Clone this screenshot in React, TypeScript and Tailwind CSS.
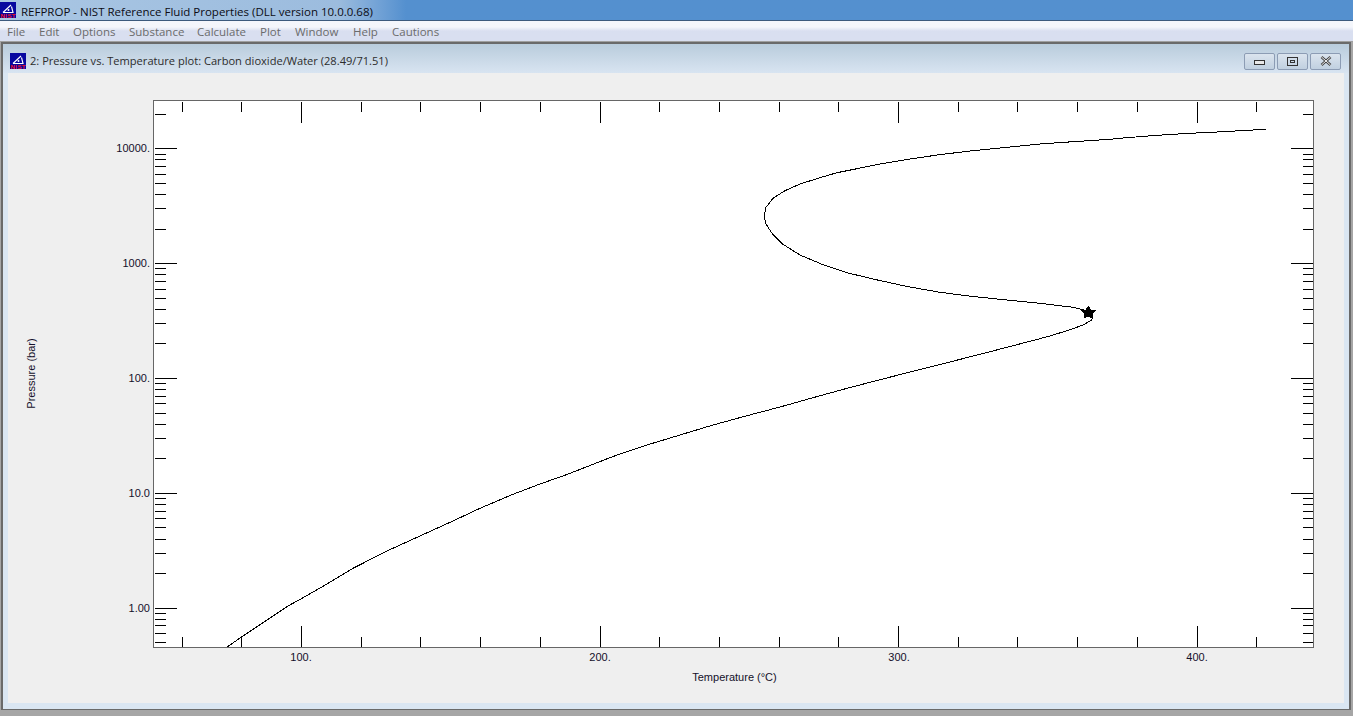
const MENU = [
  { label: 'File', w: 'w-[32px]' },
  { label: 'Edit', w: 'w-[34px]' },
  { label: 'Options', w: 'w-[56px]' },
  { label: 'Substance', w: 'w-[68px]' },
  { label: 'Calculate', w: 'w-[63px]' },
  { label: 'Plot', w: 'w-[35px]' },
  { label: 'Window', w: 'w-[58px]' },
  { label: 'Help', w: 'w-[39px]' },
  { label: 'Cautions', w: 'w-[60px]' },
]

const LEFT = 153.5
const RIGHT = 1313.5
const TOP = 100.5
const BOTTOM = 647.5
const DECADE = 114.85
const Y_ONE = 607.7

const yOf = (p: number) => Y_ONE - Math.log10(p) * DECADE
const xOf = (t: number) => 301 + (t - 100) * 2.985

const xTicks = [60, 80, 100, 120, 140, 160, 180, 200, 220, 240, 260, 280, 300, 320, 340, 360, 380, 400, 420]
const yMajor = [1, 10, 100, 1000, 10000]
const yMinor: number[] = [0.5, 0.6, 0.7, 0.8, 0.9, 20000]
for (const d of [1, 10, 100, 1000]) {
  for (let m = 2; m <= 9; m++) yMinor.push(d * m)
}

// traced off the plot, low temperature end first
const CURVE = [
  [227, 647], [242, 636.7], [263, 622.7], [288, 606], [302, 598.3], [327, 584], [353, 568.3], [387, 551],
  [420, 536], [453, 521], [480, 508.3], [513, 494.3], [540, 484], [567, 474.5], [590, 465.5], [613, 456.5],
  [647, 445], [680, 435], [713, 425], [747, 415.7], [780, 407], [813, 397.7], [847, 388.3], [880, 379.7],
  [913, 371.3], [947, 362.7], [980, 354.3], [1013, 345.7], [1047, 336.8], [1070, 329.8], [1083, 325], [1091, 320.5],
  [1093, 317], [1092, 314], [1088, 311], [1073, 307.3], [1040, 303.3], [1007, 300], [973, 296.5], [940, 292.3],
  [907, 286.5], [873, 279], [847, 272.7], [823, 264.7], [800, 255], [783, 244.3], [772, 233.3], [766, 224],
  [764, 216.7], [766, 207.3], [773, 198.3], [785, 190.7], [800, 184], [818, 178.3], [837, 172.7], [857, 168.7],
  [880, 164], [907, 159.5], [940, 154.6], [973, 150.7], [1007, 147.3], [1040, 144], [1073, 141.7], [1110, 139.3],
  [1123, 138], [1157, 135.3], [1190, 133.3], [1223, 131.7], [1266, 129.3],
]

function Logo({ className }: { className: string }) {
  return (
    <svg viewBox="0 0 16 16" className={className}>
      <rect width="16" height="16" fill="#0808a0" />
      <path d="M3 10.5 L11 3 M3 10.5 H13 L11.5 4.5" stroke="#fff" strokeWidth="1.1" fill="none" />
      <circle cx="8.5" cy="8" r="1" fill="#fff" />
      <text x="8" y="15.6" textAnchor="middle" fontSize="6" fontWeight="700" fill="#f01020" textLength="15" fontFamily="Liberation Sans, sans-serif">
        NIST
      </text>
    </svg>
  )
}

function WinButton({ children }: { children: React.ReactNode }) {
  return (
    <div className="flex h-[17px] w-[31px] items-center justify-center rounded-[2px] border border-[#8c9cb4] bg-gradient-to-b from-[#dbe4ee] to-[#c0d0e0]">
      {children}
    </div>
  )
}

function Plot() {
  const points = CURVE.map((p) => p.join(',')).join(' ')
  return (
    <svg
      viewBox="8 73 1335 630"
      width="1335"
      height="630"
      className="block"
      style={{ fontFamily: '"Liberation Sans", Arial, sans-serif' }}
    >
      <g shapeRendering="crispEdges">
        <rect x={LEFT} y={TOP} width={RIGHT - LEFT} height={BOTTOM - TOP} fill="#fff" stroke="#666" />
        {xTicks.map((t) => {
          const x = Math.round(xOf(t)) + 0.5
          const len = t % 100 === 0 ? 22 : 11
          return (
            <g key={t} stroke="#000">
              <line x1={x} x2={x} y1={TOP + 1} y2={TOP + len} />
              <line x1={x} x2={x} y1={BOTTOM - 1} y2={BOTTOM - len} />
            </g>
          )
        })}
        {yMajor.map((p) => {
          const y = Math.round(yOf(p)) + 0.5
          return (
            <g key={p} stroke="#000">
              <line x1={LEFT + 1} x2={LEFT + 23} y1={y} y2={y} />
              <line x1={RIGHT - 1} x2={RIGHT - 23} y1={y} y2={y} />
            </g>
          )
        })}
        {yMinor.map((p) => {
          const y = Math.round(yOf(p)) + 0.5
          return (
            <g key={p} stroke="#000">
              <line x1={LEFT + 1} x2={LEFT + 12} y1={y} y2={y} />
              <line x1={RIGHT - 1} x2={RIGHT - 11} y1={y} y2={y} />
            </g>
          )
        })}
        <polyline points={points} fill="none" stroke="#000" strokeWidth="1" />
        <path
          d="M1088.3 305.5 L1090.8 309.5 L1095.5 310.5 L1092.3 314 L1093 318.5 L1088.3 316.8 L1083.6 318.5 L1084.3 314 L1081.1 310.5 L1085.8 309.5 Z"
          fill="#000"
        />
      </g>
      <g fontSize="11" fill="#14102a" textAnchor="end">
        <text x="150" y="152">10000.</text>
        <text x="150" y="267">1000.</text>
        <text x="150" y="382">100.</text>
        <text x="150" y="497">10.0</text>
        <text x="150" y="612">1.00</text>
      </g>
      <g fontSize="11" fill="#14102a" textAnchor="middle">
        <text x="301" y="661">100.</text>
        <text x="600" y="661">200.</text>
        <text x="899" y="661">300.</text>
        <text x="1197" y="661">400.</text>
        <text x="734.5" y="681">Temperature (°C)</text>
        <text transform="translate(35 373.5) rotate(-90)">Pressure (bar)</text>
      </g>
    </svg>
  )
}

export default function App() {
  return (
    <div className="flex h-[716px] w-[1353px] flex-col overflow-hidden bg-[#a6a6a6] font-['Open_Sans',sans-serif] text-[11.5px]">
      <div className="flex h-[21px] items-center gap-[5px] border-b border-[#3c5a7c] bg-gradient-to-r from-[#a9c6e3] via-[#9cbcde] via-25% to-[#5490cf] to-30%">
        <Logo className="h-[16px] w-[16px]" />
        <span className="pt-[3px] text-[#0c0c14]">REFPROP - NIST Reference Fluid Properties (DLL version 10.0.0.68)</span>
      </div>

      <div className="flex h-[20px] items-center bg-gradient-to-b from-[#f4f6fb] from-30% to-[#d9dff0] to-50% pt-[2px] pl-[7px] text-[#6b6b6b]">
        {MENU.map((m) => (
          <span key={m.label} className={m.w}>
            {m.label}
          </span>
        ))}
      </div>

      <div className="h-[1px] bg-[#a0a0a0]" />

      <div className="mr-[2px] ml-[1px] flex h-[668px] flex-col border-t-2 border-r-2 border-b border-l-2 border-[#6a6a6a] bg-[#dae6f2]">
        <div className="flex h-[29px] items-center justify-between bg-gradient-to-b from-[#b9ccdc] to-[#d8e4f1] pt-[5px] pr-[8px] pl-[7px]">
          <div className="flex items-center gap-[4px]">
            <Logo className="h-[16px] w-[16px]" />
            <span className="text-[11.1px] text-[#2c2c2c]">2: Pressure vs. Temperature plot: Carbon dioxide/Water (28.49/71.51)</span>
          </div>
          <div className="flex gap-[2px]">
            <WinButton>
              <div className="mt-[3px] h-[5px] w-[11px] border border-[#333] bg-[#e8e8e8]" />
            </WinButton>
            <WinButton>
              <div className="flex h-[9px] w-[11px] items-center justify-center border border-[#333]">
                <div className="h-[3px] w-[5px] border border-[#333]" />
              </div>
            </WinButton>
            <WinButton>
              <svg viewBox="0 0 12 10" className="h-[10px] w-[12px]">
                <path d="M1.5 1 L10.5 9 M10.5 1 L1.5 9" stroke="#444" strokeWidth="2.6" />
                <path d="M1.5 1 L10.5 9 M10.5 1 L1.5 9" stroke="#eee" strokeWidth="1" />
              </svg>
            </WinButton>
          </div>
        </div>
        <div className="mx-[5px] h-[630px] bg-[#efefef]">
          <Plot />
        </div>
      </div>
    </div>
  )
}
